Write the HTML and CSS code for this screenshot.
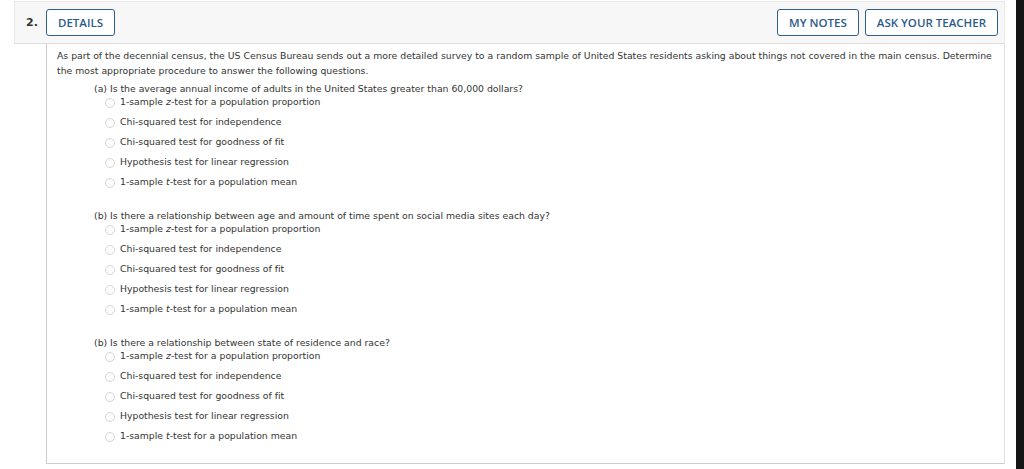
FILE: index.html
```html
<!DOCTYPE html>
<html>
<head>
<meta charset="utf-8">
<link rel="stylesheet" href="styles.css">
</head>
<body>
<div class="page">
  <div class="header">
    <span class="qnum">2.</span>
    <button class="btn">DETAILS</button>
    <span class="spacer"></span>
    <button class="btn">MY NOTES</button>
    <button class="btn">ASK YOUR TEACHER</button>
  </div>
  <div class="content">
    <p class="intro">As part of the decennial census, the US Census Bureau sends out a more detailed survey to a random sample of United States residents asking about things not covered in the main census. Determine the most appropriate procedure to answer the following questions.</p>

    <div class="question">
      <div class="qtext">(a) Is the average annual income of adults in the United States greater than 60,000 dollars?</div>
      <ul class="options">
        <li><span class="radio"></span><span class="label">1-sample <i>z</i>-test for a population proportion</span></li>
        <li><span class="radio"></span><span class="label">Chi-squared test for independence</span></li>
        <li><span class="radio"></span><span class="label">Chi-squared test for goodness of fit</span></li>
        <li><span class="radio"></span><span class="label">Hypothesis test for linear regression</span></li>
        <li><span class="radio"></span><span class="label">1-sample <i>t</i>-test for a population mean</span></li>
      </ul>
    </div>

    <div class="question">
      <div class="qtext">(b) Is there a relationship between age and amount of time spent on social media sites each day?</div>
      <ul class="options">
        <li><span class="radio"></span><span class="label">1-sample <i>z</i>-test for a population proportion</span></li>
        <li><span class="radio"></span><span class="label">Chi-squared test for independence</span></li>
        <li><span class="radio"></span><span class="label">Chi-squared test for goodness of fit</span></li>
        <li><span class="radio"></span><span class="label">Hypothesis test for linear regression</span></li>
        <li><span class="radio"></span><span class="label">1-sample <i>t</i>-test for a population mean</span></li>
      </ul>
    </div>

    <div class="question">
      <div class="qtext">(b) Is there a relationship between state of residence and race?</div>
      <ul class="options">
        <li><span class="radio"></span><span class="label">1-sample <i>z</i>-test for a population proportion</span></li>
        <li><span class="radio"></span><span class="label">Chi-squared test for independence</span></li>
        <li><span class="radio"></span><span class="label">Chi-squared test for goodness of fit</span></li>
        <li><span class="radio"></span><span class="label">Hypothesis test for linear regression</span></li>
        <li><span class="radio"></span><span class="label">1-sample <i>t</i>-test for a population mean</span></li>
      </ul>
    </div>
  </div>
</div>
<div class="strip"></div>
</body>
</html>
```
FILE: styles.css
```css
html, body {
  margin: 0;
  padding: 0;
  height: 469px;
  overflow: hidden;
  background: #ffffff;
}
body {
  display: flex;
  font-family: "DejaVu Sans", Verdana, sans-serif;
  color: #333333;
  font-variant-ligatures: none;
}
.page {
  width: 991px;
  padding: 1px 11px 0 14px;
}
.strip {
  width: 8px;
  background: #151515;
  height: 469px;
}
.header {
  height: 41px;
  background: #f7f7f7;
  border: 1px solid #e9e9e9;
  border-bottom-color: #dcdcdc;
  display: flex;
  align-items: center;
  gap: 6px;
  padding: 0 6px 0 11px;
}
.qnum {
  font-weight: bold;
  font-size: 11px;
  color: #333333;
  width: 14px;
}
.spacer {
  flex: 1;
}
.btn {
  height: 27px;
  padding: 0 11px;
  background: #ffffff;
  border: 1.5px solid #2f5f8c;
  border-radius: 3px;
  color: #2b5b88;
  font-family: "Open Sans", sans-serif;
  font-weight: 600;
  font-size: 11.5px;
  cursor: pointer;
}
.content {
  margin-left: 32px;
  border-left: 1px solid #cccccc;
  border-right: 1px solid #dddddd;
  border-bottom: 1px solid #cccccc;
  padding: 4px 10px 14px 10px;
  font-size: 9.3px;
  line-height: 15px;
}
.intro {
  margin: 0 0 4px 0;
}
.question {
  margin-left: 37px;
  margin-bottom: 14px;
}
.question:last-child {
  margin-bottom: 0;
}
.qtext {
  line-height: 13px;
}
.options {
  list-style: none;
  margin: 0;
  padding: 0 0 0 11px;
}
.options li {
  height: 20px;
  line-height: 14px;
  display: flex;
  align-items: flex-start;
}
.radio {
  width: 8px;
  height: 8px;
  border: 1px solid #d6d6d6;
  border-radius: 50%;
  background: #fdfdfd;
  margin: 3px 5px 0 0;
  flex: none;
}
```
